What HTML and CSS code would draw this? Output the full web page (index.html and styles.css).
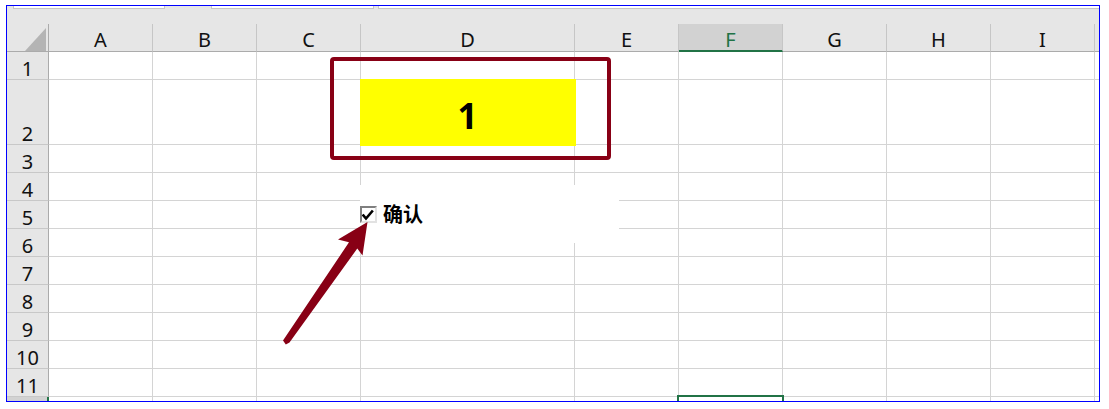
FILE: index.html
```html
<!DOCTYPE html>
<html lang="zh-CN">
<head>
<meta charset="utf-8">
<title>Sheet</title>
<link rel="stylesheet" href="styles.css">
</head>
<body>
<div class="frame">
  <div class="strip">
    <div class="box b1"></div>
    <div class="box b2"></div>
    <div class="box b3"></div>
  </div>
  <div class="colhdr">
    <div class="corner"><svg class="tri" width="21" height="23" viewBox="0 0 21 23"><polygon points="21,0 21,23 0,23" fill="#b4b4b4"/></svg></div>
    <div class="ch">A</div><div class="ch">B</div><div class="ch">C</div><div class="ch d">D</div><div class="ch">E</div><div class="ch on">F</div><div class="ch">G</div><div class="ch">H</div><div class="ch">I</div><div class="ch j"></div>
  </div>
  <div class="row"><div class="rh">1</div><div class="c"></div><div class="c"></div><div class="c"></div><div class="c d"></div><div class="c"></div><div class="c"></div><div class="c"></div><div class="c"></div><div class="c"></div><div class="c j"></div></div>
  <div class="row tall"><div class="rh">2</div><div class="c"></div><div class="c"></div><div class="c"></div><div class="c d fill">1</div><div class="c"></div><div class="c"></div><div class="c"></div><div class="c"></div><div class="c"></div><div class="c j"></div></div>
  <div class="row"><div class="rh">3</div><div class="c"></div><div class="c"></div><div class="c"></div><div class="c d"></div><div class="c"></div><div class="c"></div><div class="c"></div><div class="c"></div><div class="c"></div><div class="c j"></div></div>
  <div class="row"><div class="rh">4</div><div class="c"></div><div class="c"></div><div class="c"></div><div class="c d"></div><div class="c"></div><div class="c"></div><div class="c"></div><div class="c"></div><div class="c"></div><div class="c j"></div></div>
  <div class="row"><div class="rh">5</div><div class="c"></div><div class="c"></div><div class="c"></div><div class="c d"></div><div class="c"></div><div class="c"></div><div class="c"></div><div class="c"></div><div class="c"></div><div class="c j"></div></div>
  <div class="row"><div class="rh">6</div><div class="c"></div><div class="c"></div><div class="c"></div><div class="c d"></div><div class="c"></div><div class="c"></div><div class="c"></div><div class="c"></div><div class="c"></div><div class="c j"></div></div>
  <div class="row"><div class="rh">7</div><div class="c"></div><div class="c"></div><div class="c"></div><div class="c d"></div><div class="c"></div><div class="c"></div><div class="c"></div><div class="c"></div><div class="c"></div><div class="c j"></div></div>
  <div class="row"><div class="rh">8</div><div class="c"></div><div class="c"></div><div class="c"></div><div class="c d"></div><div class="c"></div><div class="c"></div><div class="c"></div><div class="c"></div><div class="c"></div><div class="c j"></div></div>
  <div class="row"><div class="rh">9</div><div class="c"></div><div class="c"></div><div class="c"></div><div class="c d"></div><div class="c"></div><div class="c"></div><div class="c"></div><div class="c"></div><div class="c"></div><div class="c j"></div></div>
  <div class="row"><div class="rh">10</div><div class="c"></div><div class="c"></div><div class="c"></div><div class="c d"></div><div class="c"></div><div class="c"></div><div class="c"></div><div class="c"></div><div class="c"></div><div class="c j"></div></div>
  <div class="row"><div class="rh">11</div><div class="c"></div><div class="c"></div><div class="c"></div><div class="c d"></div><div class="c"></div><div class="c"></div><div class="c"></div><div class="c"></div><div class="c"></div><div class="c j"></div></div>
  <div class="row"><div class="rh sel"></div><div class="c"></div><div class="c"></div><div class="c"></div><div class="c d"></div><div class="c"></div><div class="c"></div><div class="c"></div><div class="c"></div><div class="c"></div><div class="c j"></div></div>

  <div class="redbox"></div>
  <div class="ctrl">
    <div class="chk"><svg width="13" height="13" viewBox="0 0 13 13"><polyline points="1.5,6.5 4,9.5 10,2.5" fill="none" stroke="#000" stroke-width="2.6" stroke-linecap="square"/></svg></div>
    <span class="lbl">确认</span>
  </div>
  <div class="selbox"></div>
  <svg class="arrow" width="1092" height="395" viewBox="7 6 1092 395">
    <polygon points="367.5,222 338,239.5 349,242.3 283,340.5 285.8,344.5 289.5,342.5 357.3,248.5 362.5,255.5" fill="#880015"/>
  </svg>
</div>
</body>
</html>
```

FILE: styles.css
```css
html, body {
  margin: 0;
  padding: 0;
  background: #ffffff;
}

.frame {
  position: relative;
  box-sizing: border-box;
  width: 1094px;
  height: 397px;
  margin: 5px 0 0 6px;
  border: 1px solid #0000ff;
  background: #ffffff;
  overflow: hidden;
  font-family: "Noto Sans", "Noto Sans CJK SC", sans-serif;
}

.strip {
  display: flex;
  height: 3px;
  background: #e6e6e6;
  padding-left: 6px;
}

.box {
  box-sizing: border-box;
  height: 3px;
  background: #ffffff;
  border: 1px solid #c6c6c6;
  border-top: 0;
}

.b1 { width: 152px; }
.b2 { width: 163px; margin-left: 46px; }
.b3 { flex: 1; margin-left: 4px; border-right: 0; }

.colhdr {
  display: flex;
  align-items: flex-end;
  height: 43px;
  background: #e6e6e6;
}

.corner {
  box-sizing: border-box;
  flex: none;
  width: 42px;
  height: 28px;
  border-right: 1px solid #ababab;
  border-bottom: 1px solid #ababab;
  display: flex;
  justify-content: flex-end;
  align-items: flex-end;
  padding: 0 2px 0 0;
}

.tri { display: block; }

.ch {
  box-sizing: border-box;
  flex: none;
  width: 104px;
  height: 28px;
  border-right: 1px solid #c6c6c6;
  border-bottom: 1px solid #ababab;
  display: flex;
  justify-content: center;
  align-items: flex-end;
  padding-bottom: 1px;
  font-size: 20px;
  line-height: 20px;
  color: #111111;
}

.ch.on {
  background: #d2d2d2;
  color: #217346;
  border-bottom: 2px solid #217346;
  padding-bottom: 0;
}

.row {
  display: flex;
  height: 28px;
}

.row.tall { height: 65px; }

.rh {
  box-sizing: border-box;
  flex: none;
  width: 42px;
  background: #e6e6e6;
  border-right: 1px solid #ababab;
  border-bottom: 1px solid #c8c8c8;
  display: flex;
  justify-content: center;
  align-items: flex-end;
  font-size: 20px;
  line-height: 20px;
  color: #111111;
}

.rh.sel {
  background: #d2d2d2;
  border-right: 2px solid #217346;
}

.c {
  box-sizing: border-box;
  flex: none;
  width: 104px;
  border-right: 1px solid #d4d4d4;
  border-bottom: 1px solid #d4d4d4;
}

.d { width: 214px; }

.j {
  flex: 1;
  width: auto;
  border-right: 0;
}

.ch.j { border-right: 0; }

.fill {
  position: relative;
  z-index: 1;
  background: #ffff00;
  border-right-color: #ffff00;
  border-bottom-color: #ffff00;
  box-shadow: 0 0 0 1px #ffff00;
  display: flex;
  justify-content: center;
  align-items: flex-end;
  padding-bottom: 11px;
  font-family: "Noto Sans", sans-serif;
  font-weight: 700;
  font-size: 35px;
  line-height: 35px;
  color: #000000;
}

.redbox {
  position: absolute;
  z-index: 2;
  left: 323px;
  top: 51px;
  width: 281px;
  height: 103px;
  box-sizing: border-box;
  border: 4px solid #880015;
  border-radius: 4px;
}

.ctrl {
  position: absolute;
  z-index: 2;
  left: 353px;
  top: 179px;
  width: 259px;
  height: 58px;
  background: #ffffff;
  display: flex;
  align-items: center;
}

.chk {
  box-sizing: border-box;
  width: 17px;
  height: 17px;
  border: 2px solid;
  border-color: #7f7f7f #e2e2e2 #e2e2e2 #7f7f7f;
  background: #ffffff;
  display: flex;
  align-items: flex-start;
  justify-content: flex-start;
}

.chk svg {
  display: block;
  margin: 1px 0 0 0;
}

.lbl {
  margin-left: 6px;
  font-family: "Noto Sans CJK SC", sans-serif;
  font-weight: 700;
  font-size: 20px;
  line-height: 20px;
  color: #000000;
}

.selbox {
  position: absolute;
  z-index: 2;
  left: 670px;
  top: 389px;
  width: 107px;
  height: 20px;
  box-sizing: border-box;
  border: 2px solid #217346;
}

.arrow {
  position: absolute;
  z-index: 3;
  left: 0;
  top: 0;
  display: block;
}
```
